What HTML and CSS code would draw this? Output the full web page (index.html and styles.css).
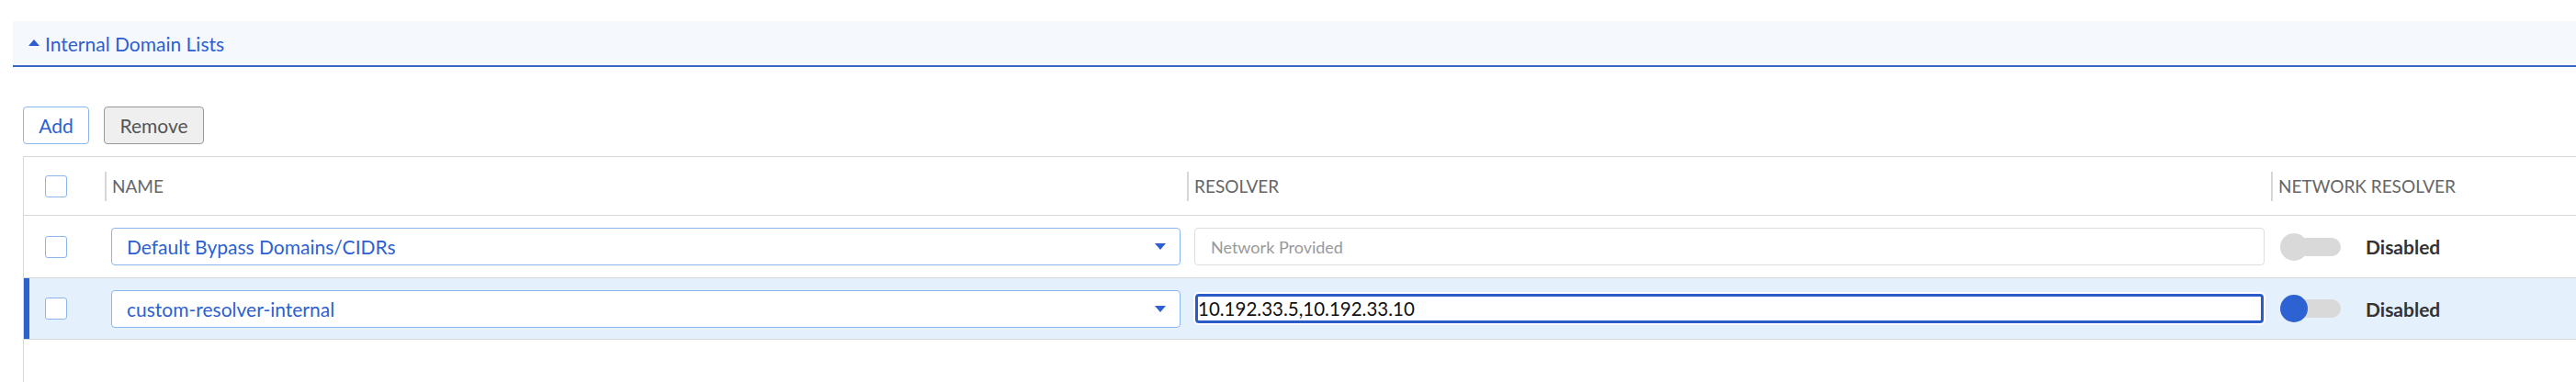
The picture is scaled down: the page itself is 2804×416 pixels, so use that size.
FILE: index.html
```html
<!DOCTYPE html>
<html>
<head>
<meta charset="utf-8">
<link rel="stylesheet" href="styles.css">
</head>
<body>
<div class="page">
  <div class="section-header">
    <span class="caret-up"></span>
    <span class="section-title">Internal Domain Lists</span>
  </div>
  <div class="toolbar">
    <button class="btn btn-add">Add</button>
    <button class="btn btn-remove">Remove</button>
  </div>
  <div class="table">
    <div class="row head">
      <div class="cell cell-check"><span class="checkbox"></span></div>
      <div class="cell"><span class="divider"></span><span class="th">NAME</span></div>
      <div class="cell"><span class="divider"></span><span class="th">RESOLVER</span></div>
      <div class="cell"><span class="divider"></span><span class="th">NETWORK RESOLVER</span></div>
    </div>
    <div class="row">
      <div class="cell cell-check"><span class="checkbox"></span></div>
      <div class="cell cell-pad">
        <div class="select"><span class="select-text">Default Bypass Domains/CIDRs</span><span class="caret-down"></span></div>
      </div>
      <div class="cell cell-pad">
        <div class="field"><span class="placeholder">Network Provided</span></div>
      </div>
      <div class="cell cell-toggle">
        <span class="toggle"><span class="knob"></span></span>
        <span class="toggle-label">Disabled</span>
      </div>
    </div>
    <div class="row selected">
      <div class="cell cell-check"><span class="checkbox"></span></div>
      <div class="cell cell-pad">
        <div class="select"><span class="select-text">custom-resolver-internal</span><span class="caret-down"></span></div>
      </div>
      <div class="cell cell-pad">
        <div class="field focused"><span class="value">10.192.33.5,10.192.33.10</span></div>
      </div>
      <div class="cell cell-toggle">
        <span class="toggle"><span class="knob on"></span></span>
        <span class="toggle-label">Disabled</span>
      </div>
    </div>
    <div class="table-rest"></div>
  </div>
</div>
</body>
</html>
```
FILE: styles.css
```css
* { box-sizing: border-box; }
html, body { margin: 0; padding: 0; background: #fff; }
body { font-family: Lato, "Open Sans", sans-serif; color: #333; }
.page { padding: 23px 0 0 14px; }

.section-header {
  height: 50px;
  background: #f5f9fe;
  border-bottom: 2px solid #3765c2;
  display: flex;
  align-items: center;
  padding-left: 17px;
}
.caret-up {
  width: 0; height: 0;
  border-left: 6.5px solid transparent;
  border-right: 6.5px solid transparent;
  border-bottom: 7px solid #2d5fd2;
  margin-right: 6px;
  margin-top: -2px;
}
.section-title { font-size: 21px; color: #2d5fd2; }

.toolbar { display: flex; gap: 16px; margin: 43px 0 0 11px; }
.btn {
  height: 41px;
  font-family: Lato, sans-serif;
  font-size: 21px;
  border-radius: 4px;
  padding: 0;
}
.btn-add { width: 72px; background: #fff; border: 1px solid #8db6ee; color: #2d5fd2; }
.btn-remove { width: 109px; background: #efefef; border: 1px solid #999; color: #555; }

.table {
  margin: 13px 0 0 11px;
  border-top: 1px solid #d8d8d8;
  border-left: 1px solid #d8d8d8;
}
.row {
  display: grid;
  grid-template-columns: 88px 1178px 1180px 1fr;
  height: 68px;
  border-bottom: 1px solid #d8d8d8;
}
.row.head { height: 64px; }
.row.selected { background: #e5f0fd; box-shadow: inset 6px 0 0 #2c5fd0; height: 67px; }
.cell { display: flex; align-items: center; }
.cell-check { padding-left: 23px; }
.checkbox {
  width: 24px; height: 24px;
  border: 1px solid #8db6ee;
  border-radius: 3px;
  background: #fff;
}
.divider { width: 2px; height: 32px; background: #d6d6d6; margin-right: 6px; }
.th { font-size: 19px; color: #666; }

.cell-pad { padding: 0 7px; }
.select {
  flex: 1;
  height: 41px;
  border: 1px solid #8db6ee;
  border-radius: 4px;
  background: #fff;
  display: flex;
  align-items: center;
  padding: 0 15px 0 16px;
}
.select-text { flex: 1; font-size: 21px; color: #2d5fd2; }
.caret-down {
  width: 0; height: 0;
  border-left: 6.5px solid transparent;
  border-right: 6.5px solid transparent;
  border-top: 7px solid #2d5fd2;
}
.field {
  flex: 1;
  height: 41px;
  margin-left: 1px;
  border: 1px solid #dedede;
  border-radius: 4px;
  background: #fff;
  display: flex;
  align-items: center;
  padding-left: 17px;
}
.placeholder { font-size: 18px; color: #999; }
.field.focused {
  height: 32px;
  margin: 0 1px 0 2px;
  border: 3px solid #2b5bc9;
  box-shadow: 0 0 0 2px #fff;
  padding-left: 0;
}
.value { font-size: 20.5px; color: #111; }

.cell-toggle { padding-left: 10px; }
.toggle {
  position: relative;
  width: 66px; height: 30px;
  display: inline-block;
}
.toggle::before {
  content: "";
  position: absolute;
  left: 4px; right: 0; top: 5px;
  height: 20px;
  border-radius: 10px;
  background: #d9d9d9;
}
.knob {
  position: absolute;
  left: 0; top: 0;
  width: 30px; height: 30px;
  border-radius: 50%;
  background: #d9d9d9;
}
.knob.on { background: #2c62d2; }
.toggle-label { margin-left: 27px; font-size: 21px; font-weight: 700; color: #333; }

.table-rest { height: 60px; }
```
